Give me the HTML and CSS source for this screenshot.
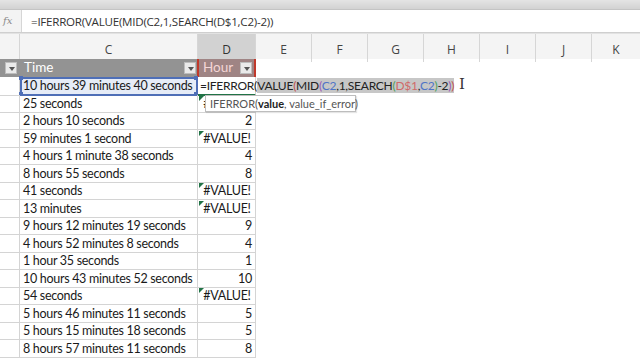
FILE: index.html
```html
<!DOCTYPE html>
<html>
<head>
<meta charset="utf-8">
<link rel="stylesheet" href="styles.css">
</head>
<body>
<div class="app">
  <div class="ribbon"></div>
  <div class="fbar">
    <div class="namebox"><span class="fx">fx</span></div>
    <div class="finput">=IFERROR(VALUE(MID(C2,1,SEARCH(D$1,C2)-2))</div>
  </div>
  <div class="colhdr">
    <div class="ch"></div>
    <div class="ch">C</div>
    <div class="ch sel">D</div>
    <div class="ch">E</div>
    <div class="ch">F</div>
    <div class="ch">G</div>
    <div class="ch">H</div>
    <div class="ch">I</div>
    <div class="ch">J</div>
    <div class="ch last">K</div>
  </div>
  <div class="sheet">
    <div class="row head">
      <div class="c b"><span class="dd"></span></div>
      <div class="c t">Time<span class="dd"></span></div>
      <div class="c h">Hour<span class="dd"></span></div>
      <div class="rest"></div>
    </div>
    <div class="row">
      <div class="c b"></div>
      <div class="c t ref">10 hours 39 minutes 40 seconds<i class="hd tl"></i><i class="hd tr"></i><i class="hd bl"></i><i class="hd br"></i></div>
      <div class="c d edit"><span class="etext">=IFERROR(<span class="selt">VALUE<span class="p1">(</span>MID<span class="p2">(</span><span class="rb">C2</span>,1,SEARCH<span class="p3">(</span><span class="rr">D$1</span>,<span class="rb">C2</span><span class="p3">)</span>-2<span class="p2">)</span><span class="p1">)</span></span></span><span class="ibeam">I</span></div>
      <div class="rest"></div>
      <div class="tip">IFERROR(<b>value</b>, value_if_error)</div>
    </div>
    <div class="row"><div class="c b"></div><div class="c t">25 seconds</div><div class="c d err">#VALUE!</div><div class="rest"></div></div>
    <div class="row"><div class="c b"></div><div class="c t">2 hours 10 seconds</div><div class="c d">2</div><div class="rest"></div></div>
    <div class="row"><div class="c b"></div><div class="c t">59 minutes 1 second</div><div class="c d err">#VALUE!</div><div class="rest"></div></div>
    <div class="row"><div class="c b"></div><div class="c t">4 hours 1 minute 38 seconds</div><div class="c d">4</div><div class="rest"></div></div>
    <div class="row"><div class="c b"></div><div class="c t">8 hours 55 seconds</div><div class="c d">8</div><div class="rest"></div></div>
    <div class="row"><div class="c b"></div><div class="c t">41 seconds</div><div class="c d err">#VALUE!</div><div class="rest"></div></div>
    <div class="row"><div class="c b"></div><div class="c t">13 minutes</div><div class="c d err">#VALUE!</div><div class="rest"></div></div>
    <div class="row"><div class="c b"></div><div class="c t">9 hours 12 minutes 19 seconds</div><div class="c d">9</div><div class="rest"></div></div>
    <div class="row"><div class="c b"></div><div class="c t">4 hours 52 minutes 8 seconds</div><div class="c d">4</div><div class="rest"></div></div>
    <div class="row"><div class="c b"></div><div class="c t">1 hour 35 seconds</div><div class="c d">1</div><div class="rest"></div></div>
    <div class="row"><div class="c b"></div><div class="c t">10 hours 43 minutes 52 seconds</div><div class="c d">10</div><div class="rest"></div></div>
    <div class="row"><div class="c b"></div><div class="c t">54 seconds</div><div class="c d err">#VALUE!</div><div class="rest"></div></div>
    <div class="row"><div class="c b"></div><div class="c t">5 hours 46 minutes 11 seconds</div><div class="c d">5</div><div class="rest"></div></div>
    <div class="row"><div class="c b"></div><div class="c t">5 hours 15 minutes 18 seconds</div><div class="c d">5</div><div class="rest"></div></div>
    <div class="row"><div class="c b"></div><div class="c t">8 hours 57 minutes 11 seconds</div><div class="c d">8</div><div class="rest"></div></div>
  </div>
</div>
</body>
</html>
```

FILE: styles.css
```css
* { box-sizing: border-box; }
html, body { margin: 0; padding: 0; }
body { width: 640px; height: 360px; overflow: hidden; background: #fff; }
.app { width: 640px; height: 360px; display: flex; flex-direction: column; font-family: "Lato", "Liberation Sans", sans-serif; }

.ribbon { height: 10px; background: linear-gradient(#e4e4e4, #d2d2d2); border-bottom: 1px solid #c4c4c4; flex: none; }
.fbar { height: 23px; display: flex; background: #fff; border-bottom: 1px solid #cfcfcf; flex: none; }
.namebox { width: 22px; background: #f3f3f3; border-right: 1px solid #d6d6d6; overflow: hidden; }
.fx { display: block; padding-left: 3px; margin-top: 5px; font-family: "DejaVu Serif", serif; font-style: italic; font-size: 10px; line-height: 12px; color: #8a8a8a; }
.finput { flex: 1; padding: 1px 0 0 9px; font-family: "Open Sans", sans-serif; font-size: 11.6px; letter-spacing: -0.25px; line-height: 22px; color: #333; white-space: nowrap; }

.colhdr { height: 26px; display: grid; grid-template-columns: 20px 178px 58px 56px 56px 56px 56px 56px 56px 48px; background: #f4f4f4; border-top: 1px solid #e2e2e2; flex: none; }
.ch { border-right: 1px solid #d6d6d6; text-align: center; font-family: "Open Sans", sans-serif; font-size: 12px; color: #444; line-height: 20px; padding-top: 6px; }
.ch.sel { background: #d2d2d2; border-bottom: 2px solid #8fa59a; color: #333; }
.ch.last { border-right: none; }

.sheet { flex: 1; position: relative; }
.row { height: 17.5px; display: grid; grid-template-columns: 20px 178px 58px 1fr; position: relative; }
.c { border-bottom: 1px solid #d4d4d4; border-right: 1px solid #d4d4d4; font-size: 12.5px; letter-spacing: -0.3px; line-height: 17px; color: #1a1a1a; white-space: nowrap; position: relative; }
.c.t { padding-left: 3px; }
.c.d { text-align: right; padding-right: 3px; }
.c.d.err { text-align: center; padding-left: 4px; }
.c.d.err::before { content: ""; position: absolute; left: 1px; top: 1px; border-style: solid; border-width: 5px 5px 0 0; border-color: #217346 transparent transparent transparent; }

.row.head { height: 18px; }
.row.head .c { background: #939393; color: #fff; border-bottom: none; border-right: none; font-size: 13.5px; letter-spacing: 0; }
.row.head .c.t { padding-left: 4px; }
.row.head .c.h { background: #9f8484; color: #f5d6d6; border-left: 2px solid #c0392b; border-right: 2px solid #c0392b; padding-left: 4px; margin-left: -1px; }
.dd { position: absolute; top: 3px; right: 2px; width: 12px; height: 12px; background: #eaeaea; border: 1px solid #bdbdbd; }
.dd::after { content: ""; position: absolute; left: 2.5px; top: 4px; border-style: solid; border-width: 4px 3px 0 3px; border-color: #555 transparent transparent transparent; }
.c.b .dd { right: 3px; }

.c.ref { background: #e6ecf7; outline: 2px solid #4f6fb7; outline-offset: -2px; }
.hd { position: absolute; width: 4px; height: 4px; background: #4f6fb7; }
.hd.tl { left: -1px; top: -1px; }
.hd.tr { right: -1px; top: -1px; }
.hd.bl { left: -1px; bottom: -1px; }
.hd.br { right: -1px; bottom: -1px; }

.c.edit { text-align: left; padding: 0 0 0 2px; overflow: visible; z-index: 2; border-bottom: 2px solid #217346; font-size: 12px; letter-spacing: -0.25px; }
.etext { display: inline-block; color: #222; }
.selt { background: #c7c7c7; }
.p1 { color: #c0504d; }
.p2 { color: #9b59b6; }
.p3 { color: #4aa05a; }
.rb { color: #4f74c6; }
.rr { color: #d06a6a; }
.ibeam { position: absolute; left: 261px; top: -1px; font-family: "DejaVu Serif", serif; font-size: 15px; color: #333; letter-spacing: 0; }

.tip { position: absolute; left: 205px; top: 18px; width: 151px; height: 17px; background: #fff; border: 1px solid #bdbdbd; font-family: "Lato", sans-serif; font-size: 11px; line-height: 15px; color: #555; padding-left: 4px; z-index: 3; white-space: nowrap; box-shadow: 1px 1px 1px rgba(0,0,0,0.1); }
.tip b { color: #222; font-weight: bold; }
.rest { }
```
